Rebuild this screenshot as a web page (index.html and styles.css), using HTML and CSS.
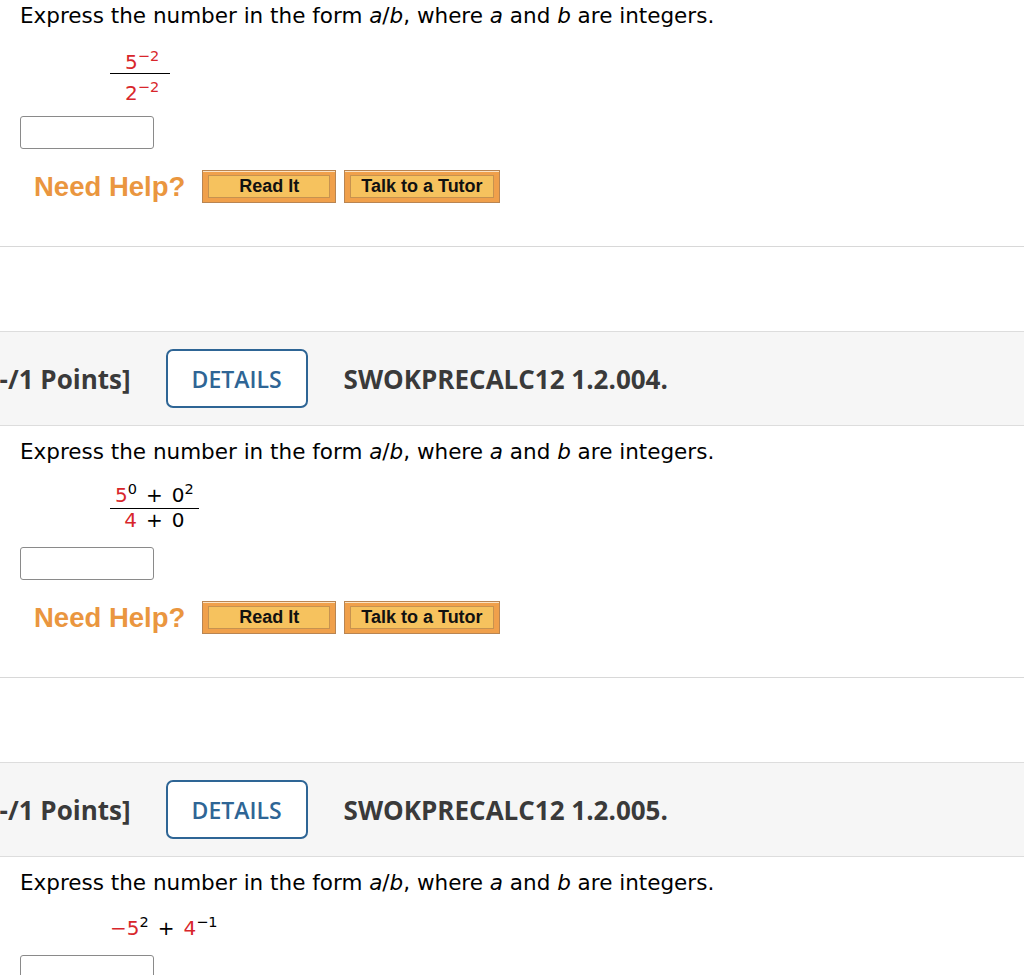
FILE: index.html
```html
<!DOCTYPE html>
<html>
<head>
<meta charset="UTF-8">
<title>Homework</title>
<link rel="stylesheet" href="styles.css">
</head>
<body>

<div class="question first">
  <div class="qbody">
    <div class="prompt">Express the number in the form <i>a</i>/<i>b</i>, where <i>a</i> and <i>b</i> are integers.</div>
    <div class="math m1">
      <span class="frac">
        <span class="num"><span class="red">5<sup>&minus;2</sup></span></span>
        <span class="den tall"><span class="red">2<sup>&minus;2</sup></span></span>
      </span>
    </div>
    <input class="answer" type="text">
    <div class="help">
      <span class="need">Need Help?</span>
      <a class="hbtn read" href="#"><span>Read It</span></a>
      <a class="hbtn" href="#"><span>Talk to a Tutor</span></a>
    </div>
  </div>
</div>

<div class="question">
  <div class="qhead">
    <span class="points">[-/1 Points]</span>
    <a class="details" href="#">DETAILS</a>
    <span class="qid">SWOKPRECALC12 1.2.004.</span>
  </div>
  <div class="qbody">
    <div class="prompt">Express the number in the form <i>a</i>/<i>b</i>, where <i>a</i> and <i>b</i> are integers.</div>
    <div class="math m2">
      <span class="frac">
        <span class="num"><span class="red">5</span><sup>0</sup><span class="op">+</span>0<sup>2</sup></span>
        <span class="den"><span class="red">4</span><span class="op">+</span>0</span>
      </span>
    </div>
    <input class="answer" type="text">
    <div class="help">
      <span class="need">Need Help?</span>
      <a class="hbtn read" href="#"><span>Read It</span></a>
      <a class="hbtn" href="#"><span>Talk to a Tutor</span></a>
    </div>
  </div>
</div>

<div class="question">
  <div class="qhead">
    <span class="points">[-/1 Points]</span>
    <a class="details" href="#">DETAILS</a>
    <span class="qid">SWOKPRECALC12 1.2.005.</span>
  </div>
  <div class="qbody">
    <div class="prompt">Express the number in the form <i>a</i>/<i>b</i>, where <i>a</i> and <i>b</i> are integers.</div>
    <div class="math m3">
      <span class="red">&minus;5</span><sup>2</sup><span class="op">+</span><span class="red">4</span><sup>&minus;1</sup>
    </div>
    <input class="answer" type="text">
  </div>
</div>

</body>
</html>
```

FILE: styles.css
```css
body { margin: 0; background: #fff; overflow: hidden; font-family: "DejaVu Sans", Verdana, sans-serif; color: #000; }

.question { margin-bottom: 84px; }
.first .qbody { padding-top: 3px; }

.qhead { display: flex; align-items: center; height: 93px; background: #f6f6f6; border-top: 1px solid #ddd; border-bottom: 1px solid #ddd; font-family: "Open Sans", sans-serif; font-weight: bold; font-size: 26px; color: #3a3a3a; }
.points { margin-left: -9px; }
.details { margin: 0 36px 0 35px; width: 142px; height: 59px; box-sizing: border-box; display: flex; align-items: center; justify-content: center; border: 2.5px solid #2e6595; border-radius: 7px; background: #fff; color: #2e6595; font-weight: 600; font-size: 23px; text-decoration: none; }

.qbody { padding: 13px 20px 43px; border-bottom: 1px solid #d8d8d8; }
.prompt { font-size: 21.5px; line-height: 26px; }
.prompt i { font-style: oblique; }

.math { padding-left: 90px; font-size: 20px; line-height: 22px; }
.math sup { font-size: 14.5px; vertical-align: 8px; line-height: 0; }
.math .op { margin: 0 9px; }
.m1 { padding-top: 22px; padding-bottom: 12px; }
.m2 { padding-top: 19px; padding-bottom: 16px; }
.m3 { padding-top: 21px; padding-bottom: 16px; }
.frac { display: inline-flex; flex-direction: column; align-items: stretch; text-align: center; }
.num { padding: 0 5px 2px; }
.den { border-top: 1px solid #000; padding: 0 5px; }
.m1 .num { padding: 0 11px 0 15px; }
.den.tall { padding: 8px 11px 0 15px; }
.red { color: #d8262b; }

.answer { display: block; width: 134px; height: 33px; box-sizing: border-box; margin: 0; border: 1px solid #8a8a8a; border-radius: 3px; }

.help { display: flex; align-items: center; margin-top: 21px; margin-left: 14px; gap: 8px; }
.need { font-family: "Liberation Sans", Arial, sans-serif; font-weight: bold; font-size: 27.5px; color: #ea963f; margin-right: 9px; }
.hbtn { display: block; height: 33px; box-sizing: border-box; padding: 4px 5px; background: #f0a04b; border: 1px solid #b98552; box-shadow: inset 0 1px 0 #fbe3c4; text-decoration: none; }
.hbtn span { display: flex; align-items: center; justify-content: center; height: 100%; box-sizing: border-box; padding: 0 10px; background: #f6c25e; border: 1px solid #c7924f; font-family: "Liberation Sans", Arial, sans-serif; font-weight: bold; font-size: 18px; color: #111; }
.hbtn.read { width: 134px; }
```
